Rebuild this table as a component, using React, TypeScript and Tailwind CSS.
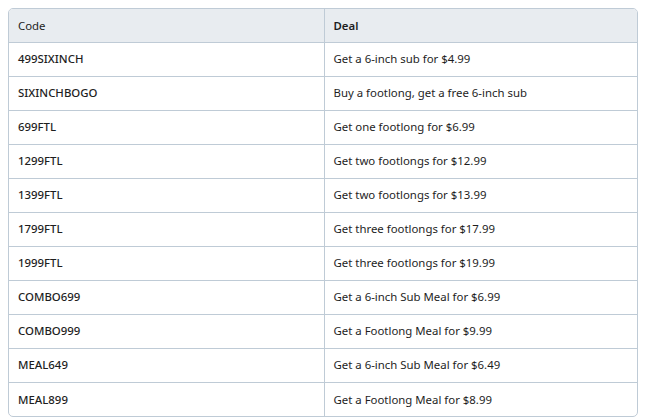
const deals = [
  { code: "499SIXINCH", deal: "Get a 6-inch sub for $4.99" },
  { code: "SIXINCHBOGO", deal: "Buy a footlong, get a free 6-inch sub" },
  { code: "699FTL", deal: "Get one footlong for $6.99" },
  { code: "1299FTL", deal: "Get two footlongs for $12.99" },
  { code: "1399FTL", deal: "Get two footlongs for $13.99" },
  { code: "1799FTL", deal: "Get three footlongs for $17.99" },
  { code: "1999FTL", deal: "Get three footlongs for $19.99" },
  { code: "COMBO699", deal: "Get a 6-inch Sub Meal for $6.99" },
  { code: "COMBO999", deal: "Get a Footlong Meal for $9.99" },
  { code: "MEAL649", deal: "Get a 6-inch Sub Meal for $6.49" },
  { code: "MEAL899", deal: "Get a Footlong Meal for $8.99" },
];

export default function App() {
  return (
    <div className="w-[646px] h-[420px] bg-white px-2 pt-2 font-['Noto_Sans',sans-serif] text-[11.4px] text-[#1e1e1e]">
      <div className="border border-[#bfcbd6] rounded-[5px] overflow-hidden">
        <table className="w-full border-collapse table-fixed">
          <thead>
            <tr className="bg-[#e8ecf0] h-[33px]">
              <th className="w-[315px] text-left font-normal px-[9px] border-r border-b border-[#bfcbd6]">Code</th>
              <th className="text-left font-semibold px-[9px] border-b border-[#bfcbd6]">Deal</th>
            </tr>
          </thead>
          <tbody>
            {deals.map((d, i) => (
              <tr key={d.code} className="h-[34px]">
                <td
                  className={`px-[9px] font-medium border-r border-[#bfcbd6] ${
                    i < deals.length - 1 ? "border-b" : ""
                  }`}
                >
                  {d.code}
                </td>
                <td className={`px-[9px] border-[#bfcbd6] ${i < deals.length - 1 ? "border-b" : ""}`}>
                  {d.deal}
                </td>
              </tr>
            ))}
          </tbody>
        </table>
      </div>
    </div>
  );
}
